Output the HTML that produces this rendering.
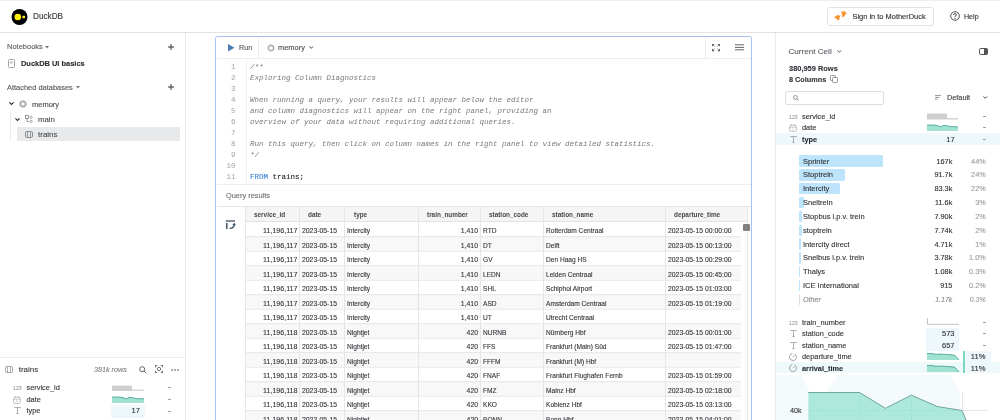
<!DOCTYPE html>
<html><head><meta charset="utf-8">
<style>
*{margin:0;padding:0;box-sizing:border-box}
html,body{width:1000px;height:420px;overflow:hidden;background:#fff;font-family:"Liberation Sans",sans-serif;color:#2f3237}
body{will-change:transform}
.a{position:absolute;white-space:nowrap;-webkit-text-stroke:0.12px currentColor}
.b{position:absolute}
svg{position:absolute;overflow:visible}
</style></head><body>
<div class="b" style="left:0px;top:0px;width:1000px;height:1px;background:#efefef;"></div>
<div class="b" style="left:0px;top:32px;width:1000px;height:1px;background:#e3e3e3;"></div>
<svg style="left:11px;top:8.5px" width="17" height="17" viewBox="0 0 17 17"><circle cx="8.5" cy="8" r="8" fill="#000"/><circle cx="6.8" cy="8" r="3.3" fill="#fff100"/><rect x="11.4" y="6.8" width="2.6" height="2.4" fill="#fff100"/></svg>
<div class="a" style="top:11.30px;font-size:8.2px;line-height:12px;color:#33363b;left:33.00px;">DuckDB</div>
<div class="b" style="left:826.5px;top:7px;width:107px;height:19px;background:#fff;border:1px solid #e2e2e2;border-radius:3px"></div>
<svg style="left:833px;top:10px" width="15" height="11" viewBox="0 0 15 11"><path d="M1.2 7.3 L3.8 5.6 L4.6 4.6 L5.7 5.8 L7.6 5.2 L6.6 7.6 L6 10.7 L4.4 9.4 Z" fill="#f7922e"/><path d="M8 1.2 L9.5 1.8 L11.5 1 L12.6 2.7 L14.2 3.6 L12.4 4.6 L10.9 6.7 L9.3 7.2 L9 4 Z" fill="#f7922e"/></svg>
<div class="a" style="top:10.50px;font-size:7.45px;line-height:12px;color:#2f3237;left:852.50px;">Sign in to MotherDuck</div>
<svg style="left:949.5px;top:11px" width="10" height="10" viewBox="0 0 10 10"><circle cx="5" cy="5" r="4.3" fill="none" stroke="#3a3d42" stroke-width="0.9"/><path d="M3.6 4 Q3.6 2.6 5 2.6 Q6.4 2.6 6.4 3.9 Q6.4 4.8 5 5.3 L5 6" fill="none" stroke="#3a3d42" stroke-width="0.9"/><circle cx="5" cy="7.4" r="0.55" fill="#3a3d42"/></svg>
<div class="a" style="top:10.50px;font-size:7.1px;line-height:12px;color:#2f3237;left:964.00px;">Help</div>
<div class="b" style="left:185px;top:33px;width:1px;height:387px;background:#ebebeb;"></div>
<div class="a" style="top:41.00px;font-size:7.5px;line-height:12px;color:#5c6067;left:7.00px;">Notebooks</div>
<svg style="left:45px;top:45.5px" width="4" height="3" viewBox="0 0 4 3"><path d="M0 0 L4 0 L2 2.5Z" fill="#777"/></svg>
<svg style="left:168px;top:43.5px" width="6" height="6" viewBox="0 0 6 6"><path d="M3 0 V6 M0 3 H6" stroke="#333" stroke-width="1"/></svg>
<svg style="left:8px;top:59px" width="7" height="9" viewBox="0 0 7 9"><rect x="0.5" y="0.5" width="6" height="8" rx="1" fill="none" stroke="#9a9a9a" stroke-width="0.9"/><path d="M2 2.5 H4.5 V4.5 H2Z" fill="#bbb"/></svg>
<div class="a" style="top:58.00px;font-size:7.45px;line-height:12px;color:#2b2e33;left:21.00px;font-weight:bold;">DuckDB UI basics</div>
<div class="a" style="top:81.50px;font-size:7.45px;line-height:12px;color:#55595f;left:7.00px;">Attached databases</div>
<svg style="left:75.5px;top:86px" width="4" height="3" viewBox="0 0 4 3"><path d="M0 0 L4 0 L2 2.5Z" fill="#777"/></svg>
<svg style="left:168px;top:84px" width="6" height="6" viewBox="0 0 6 6"><path d="M3 0 V6 M0 3 H6" stroke="#333" stroke-width="1"/></svg>
<svg style="left:9px;top:102px" width="5" height="3" viewBox="0 0 5 3"><path d="M0.4 0.4 L2.5 2.5 L4.6 0.4" fill="none" stroke="#333" stroke-width="1.2"/></svg>
<svg style="left:19px;top:100.3px" width="8" height="8" viewBox="0 0 8 8"><circle cx="4" cy="4" r="2.5" fill="none" stroke="#a9a9a9" stroke-width="1.5"/><circle cx="4" cy="4" r="3.5" fill="none" stroke="#b9b9b9" stroke-width="1" stroke-dasharray="1.1 0.7"/></svg>
<div class="a" style="top:99.00px;font-size:7.5px;line-height:12px;color:#4a4d52;left:32.00px;">memory</div>
<div class="b" style="left:10px;top:112px;width:1px;height:29px;background:#e9e9e9;"></div>
<svg style="left:15px;top:117.5px" width="5" height="3" viewBox="0 0 5 3"><path d="M0.4 0.4 L2.5 2.5 L4.6 0.4" fill="none" stroke="#333" stroke-width="1.2"/></svg>
<svg style="left:25px;top:115px" width="8" height="8" viewBox="0 0 8 8"><rect x="0.5" y="0.5" width="3" height="3" fill="none" stroke="#888" stroke-width="0.8"/><path d="M2 3.5 V6.5 H4" fill="none" stroke="#888" stroke-width="0.8"/><rect x="4.8" y="1.3" width="2.5" height="2" rx="1" fill="none" stroke="#888" stroke-width="0.7"/><rect x="4.8" y="5.5" width="2.5" height="2" rx="1" fill="none" stroke="#888" stroke-width="0.7"/></svg>
<div class="a" style="top:114.00px;font-size:7.8px;line-height:12px;color:#4a4d52;left:38.00px;">main</div>
<div class="b" style="left:17px;top:126.5px;width:163px;height:14.5px;background:#e8e9eb;"></div>
<svg style="left:25px;top:131px" width="8" height="7" viewBox="0 0 8 7"><rect x="0.5" y="0.5" width="7" height="6" rx="1.3" fill="none" stroke="#808287" stroke-width="0.9"/><path d="M2.5 0.5 V6.5 M5.5 0.5 V6.5" stroke="#8a8c90" stroke-width="0.9"/></svg>
<div class="a" style="top:129.00px;font-size:8px;line-height:12px;color:#4a4d52;left:38.00px;">trains</div>
<div class="b" style="left:0px;top:357px;width:185px;height:1px;background:#ececec;"></div>
<svg style="left:5px;top:366px" width="8" height="7" viewBox="0 0 8 7"><rect x="0.5" y="0.5" width="7" height="6" rx="1.3" fill="none" stroke="#8d8f94" stroke-width="0.8"/><path d="M2.5 0.5 V6.5 M5.5 0.5 V6.5" stroke="#9a9ca0" stroke-width="0.8"/></svg>
<div class="a" style="top:364.00px;font-size:8px;line-height:12px;color:#3a3d42;left:18.70px;">trains</div>
<div class="a" style="top:364.00px;font-size:7.2px;line-height:12px;color:#808389;left:94.00px;font-style:italic;">381k rows</div>
<svg style="left:139px;top:366px" width="8" height="8" viewBox="0 0 8 8"><circle cx="3.2" cy="3.2" r="2.5" fill="none" stroke="#555" stroke-width="0.9"/><path d="M5 5 L7.3 7.3" stroke="#555" stroke-width="0.9"/></svg>
<svg style="left:155px;top:365px" width="8" height="8" viewBox="0 0 8 8"><path d="M0.5 2.2 V0.5 H2.2 M5.8 0.5 H7.5 V2.2 M7.5 5.8 V7.5 H5.8 M2.2 7.5 H0.5 V5.8" fill="none" stroke="#555" stroke-width="0.9"/><circle cx="4" cy="4" r="1.7" fill="none" stroke="#555" stroke-width="0.8"/></svg>
<svg style="left:171px;top:368.5px" width="8" height="2" viewBox="0 0 8 2"><circle cx="1" cy="1" r="0.8" fill="#444"/><circle cx="4" cy="1" r="0.8" fill="#444"/><circle cx="7" cy="1" r="0.8" fill="#444"/></svg>
<div class="a" style="top:384.00px;font-size:5.2px;line-height:8px;color:#9a9da2;left:13.00px;">123</div>
<div class="a" style="top:381.90px;font-size:7.4px;line-height:12px;color:#33363b;left:26.50px;">service_id</div>
<svg style="left:112px;top:385px" width="32" height="6" viewBox="0 0 32 6"><path d="M0 0.5 H19 L20 1.5 V5.5 L32 5.5 L32 6 L0 6Z" fill="#cfcfd2"/><path d="M20 5 H32" stroke="#bbb" stroke-width="0.6"/></svg>
<div class="b" style="left:168.3px;top:387.4px;width:2.8px;height:0.9px;background:#a0a0a0;"></div>
<svg style="left:13px;top:395.5px" width="8" height="8" viewBox="0 0 8 8"><rect x="0.6" y="1.2" width="6.8" height="6.2" rx="1.2" fill="none" stroke="#b0b2b6" stroke-width="0.8"/><path d="M0.6 3.2 H7.4 M2.5 0.3 V2 M5.5 0.3 V2 M4 4.5 V6.5" stroke="#b0b2b6" stroke-width="0.7"/></svg>
<div class="a" style="top:394.00px;font-size:7.4px;line-height:12px;color:#33363b;left:26.50px;">date</div>
<svg style="left:112px;top:396px" width="32" height="7" viewBox="0 0 32 7"><path d="M0.00 1.00 L7.00 1.00 L11.00 1.60 L14.00 2.80 L17.00 1.60 L20.00 1.50 L24.00 2.60 L32.00 2.80 L32 7 L0 7Z" fill="#9fe2d2"/><path d="M0.00 1.00 L7.00 1.00 L11.00 1.60 L14.00 2.80 L17.00 1.60 L20.00 1.50 L24.00 2.60 L32.00 2.80" fill="none" stroke="#2f8f7c" stroke-width="0.7"/></svg>
<div class="b" style="left:168.3px;top:399px;width:2.8px;height:0.9px;background:#a0a0a0;"></div>
<div class="b" style="left:111px;top:405px;width:34px;height:13px;background:#eef8fc;"></div>
<svg style="left:13.5px;top:407.3px" width="7" height="7" viewBox="0 0 7 7"><path d="M0.5 1.2 V0.5 H6.5 V1.2 M3.5 0.5 V6.5 M2.3 6.5 H4.7" fill="none" stroke="#9a9da2" stroke-width="0.8"/></svg>
<div class="a" style="top:405.00px;font-size:7.4px;line-height:12px;color:#33363b;left:26.50px;">type</div>
<div class="a" style="top:405.30px;font-size:7.6px;line-height:12px;color:#2f3237;right:860.00px;text-align:right;">17</div>
<div class="b" style="left:168.3px;top:410.7px;width:2.8px;height:0.9px;background:#a0a0a0;"></div>
<div class="b" style="left:215px;top:36px;width:537px;height:400px;border:1.8px solid #a3c2ee;border-radius:2.5px"></div>
<div class="b" style="left:216.5px;top:58px;width:534px;height:1px;background:#eeeeee;"></div>
<svg style="left:228px;top:44px" width="7" height="8" viewBox="0 0 7 8"><path d="M0 0 L6.5 3.8 L0 7.6Z" fill="#4b7eb0"/></svg>
<div class="a" style="top:42.00px;font-size:7.2px;line-height:12px;color:#54575c;left:239.00px;">Run</div>
<div class="b" style="left:258px;top:37.5px;width:1px;height:20.5px;background:#ededed;"></div>
<svg style="left:266.5px;top:43.5px" width="8" height="8" viewBox="0 0 8 8"><circle cx="4" cy="4" r="2.5" fill="none" stroke="#b0b0b0" stroke-width="1.3"/><circle cx="4" cy="4" r="3.5" fill="none" stroke="#c0c0c0" stroke-width="0.9" stroke-dasharray="1.1 0.7"/></svg>
<div class="a" style="top:42.00px;font-size:7.45px;line-height:12px;color:#4c4f54;left:278.00px;">memory</div>
<svg style="left:309px;top:46px" width="4.5" height="3" viewBox="0 0 4.5 3"><path d="M0.4 0.4 L2.25 2.4 L4.1 0.4" fill="none" stroke="#5a5a5a" stroke-width="1"/></svg>
<div class="b" style="left:704.5px;top:37.5px;width:1px;height:20.5px;background:#ededed;"></div>
<svg style="left:712.4px;top:44px" width="7.7" height="7.2" viewBox="0 0 7.7 7.2"><path d="M0 0 H2.6 L0 2.6Z M8 0 H5.4 L8 2.6Z M0 7.2 H2.6 L0 4.6Z M8 7.2 H5.4 L8 4.6Z" fill="#555"/><path d="M1 1 L3 2.8 M7 1 L5 2.8 M1 6.2 L3 4.4 M7 6.2 L5 4.4" stroke="#777" stroke-width="0.6"/></svg>
<svg style="left:735px;top:44px" width="9" height="7" viewBox="0 0 9 7"><path d="M0 0.8 H9 M0 3.4 H9 M0 5.8 H9" stroke="#666" stroke-width="1"/></svg>
<div class="b" style="left:246px;top:59px;width:1px;height:125px;background:#f0f0f0;"></div>
<div class="a" style="top:62.30px;font-size:7.5px;line-height:11px;color:#a3a3a3;right:764.50px;text-align:right;font-family:'Liberation Mono',monospace;-webkit-text-stroke:0;">1</div>
<div class="a" style="top:62.30px;font-size:7.5px;line-height:11px;color:#7a7a7a;left:250.00px;font-style:italic;font-family:'Liberation Mono',monospace;-webkit-text-stroke:0;">/**</div>
<div class="a" style="top:73.30px;font-size:7.5px;line-height:11px;color:#a3a3a3;right:764.50px;text-align:right;font-family:'Liberation Mono',monospace;-webkit-text-stroke:0;">2</div>
<div class="a" style="top:73.30px;font-size:7.5px;line-height:11px;color:#7a7a7a;left:250.00px;font-style:italic;font-family:'Liberation Mono',monospace;-webkit-text-stroke:0;">Exploring Column Diagnostics</div>
<div class="a" style="top:84.30px;font-size:7.5px;line-height:11px;color:#a3a3a3;right:764.50px;text-align:right;font-family:'Liberation Mono',monospace;-webkit-text-stroke:0;">3</div>
<div class="a" style="top:84.30px;font-size:7.5px;line-height:11px;color:#7a7a7a;left:250.00px;font-style:italic;font-family:'Liberation Mono',monospace;-webkit-text-stroke:0;"></div>
<div class="a" style="top:95.30px;font-size:7.5px;line-height:11px;color:#a3a3a3;right:764.50px;text-align:right;font-family:'Liberation Mono',monospace;-webkit-text-stroke:0;">4</div>
<div class="a" style="top:95.30px;font-size:7.5px;line-height:11px;color:#7a7a7a;left:250.00px;font-style:italic;font-family:'Liberation Mono',monospace;-webkit-text-stroke:0;">When running a query, your results will appear below the editor</div>
<div class="a" style="top:106.30px;font-size:7.5px;line-height:11px;color:#a3a3a3;right:764.50px;text-align:right;font-family:'Liberation Mono',monospace;-webkit-text-stroke:0;">5</div>
<div class="a" style="top:106.30px;font-size:7.5px;line-height:11px;color:#7a7a7a;left:250.00px;font-style:italic;font-family:'Liberation Mono',monospace;-webkit-text-stroke:0;">and column diagnostics will appear on the right panel, providing an</div>
<div class="a" style="top:117.30px;font-size:7.5px;line-height:11px;color:#a3a3a3;right:764.50px;text-align:right;font-family:'Liberation Mono',monospace;-webkit-text-stroke:0;">6</div>
<div class="a" style="top:117.30px;font-size:7.5px;line-height:11px;color:#7a7a7a;left:250.00px;font-style:italic;font-family:'Liberation Mono',monospace;-webkit-text-stroke:0;">overview of your data without requiring additional queries.</div>
<div class="a" style="top:128.30px;font-size:7.5px;line-height:11px;color:#a3a3a3;right:764.50px;text-align:right;font-family:'Liberation Mono',monospace;-webkit-text-stroke:0;">7</div>
<div class="a" style="top:128.30px;font-size:7.5px;line-height:11px;color:#7a7a7a;left:250.00px;font-style:italic;font-family:'Liberation Mono',monospace;-webkit-text-stroke:0;"></div>
<div class="a" style="top:139.30px;font-size:7.5px;line-height:11px;color:#a3a3a3;right:764.50px;text-align:right;font-family:'Liberation Mono',monospace;-webkit-text-stroke:0;">8</div>
<div class="a" style="top:139.30px;font-size:7.5px;line-height:11px;color:#7a7a7a;left:250.00px;font-style:italic;font-family:'Liberation Mono',monospace;-webkit-text-stroke:0;">Run this query, then click on column names in the right panel to view detailed statistics.</div>
<div class="a" style="top:150.30px;font-size:7.5px;line-height:11px;color:#a3a3a3;right:764.50px;text-align:right;font-family:'Liberation Mono',monospace;-webkit-text-stroke:0;">9</div>
<div class="a" style="top:150.30px;font-size:7.5px;line-height:11px;color:#7a7a7a;left:250.00px;font-style:italic;font-family:'Liberation Mono',monospace;-webkit-text-stroke:0;">*/</div>
<div class="a" style="top:161.30px;font-size:7.5px;line-height:11px;color:#a3a3a3;right:764.50px;text-align:right;font-family:'Liberation Mono',monospace;-webkit-text-stroke:0;">10</div>
<div class="a" style="top:161.30px;font-size:7.5px;line-height:11px;color:#7a7a7a;left:250.00px;font-style:italic;font-family:'Liberation Mono',monospace;-webkit-text-stroke:0;"></div>
<div class="a" style="top:172.30px;font-size:7.5px;line-height:11px;color:#a3a3a3;right:764.50px;text-align:right;font-family:'Liberation Mono',monospace;-webkit-text-stroke:0;">11</div>
<div class="a" style="left:250px;top:171.8px;font-size:7.5px;line-height:11px;font-family:'Liberation Mono',monospace;color:#222;-webkit-text-stroke:0.1px #222"><span style="color:#3f84d8;-webkit-text-stroke:0.1px #3f84d8">FROM</span> trains;</div>
<div class="b" style="left:216.5px;top:184px;width:534px;height:1px;background:#eeeeee;"></div>
<div class="a" style="top:190.00px;font-size:7.4px;line-height:12px;color:#6d7076;left:226.00px;">Query results</div>
<div class="b" style="left:216.5px;top:206px;width:534px;height:1px;background:#e6e6e6;"></div>
<div class="b" style="left:246px;top:207px;width:501px;height:14px;background:#f5f5f5;"></div>
<div class="b" style="left:246px;top:220.5px;width:501px;height:1.5px;background:#e3e3e3;"></div>
<div class="b" style="left:245px;top:207px;width:1px;height:213px;background:#e6e6e6;"></div>
<div class="b" style="left:299px;top:207px;width:1px;height:213px;background:#e6e6e6;"></div>
<div class="b" style="left:344px;top:207px;width:1px;height:213px;background:#e6e6e6;"></div>
<div class="b" style="left:418px;top:207px;width:1px;height:213px;background:#e6e6e6;"></div>
<div class="b" style="left:480px;top:207px;width:1px;height:213px;background:#e6e6e6;"></div>
<div class="b" style="left:543px;top:207px;width:1px;height:213px;background:#e6e6e6;"></div>
<div class="b" style="left:665px;top:207px;width:1px;height:213px;background:#e6e6e6;"></div>
<div class="b" style="left:747px;top:207px;width:1px;height:213px;background:#e6e6e6;"></div>
<div class="a" style="top:210.00px;font-size:6.4px;line-height:10px;color:#44474c;left:254.00px;font-weight:bold;-webkit-text-stroke:0;">service_id</div>
<div class="a" style="top:210.00px;font-size:6.4px;line-height:10px;color:#44474c;left:308.00px;font-weight:bold;-webkit-text-stroke:0;">date</div>
<div class="a" style="top:210.00px;font-size:6.4px;line-height:10px;color:#44474c;left:354.00px;font-weight:bold;-webkit-text-stroke:0;">type</div>
<div class="a" style="top:210.00px;font-size:6.4px;line-height:10px;color:#44474c;left:427.00px;font-weight:bold;-webkit-text-stroke:0;">train_number</div>
<div class="a" style="top:210.00px;font-size:6.4px;line-height:10px;color:#44474c;left:489.00px;font-weight:bold;-webkit-text-stroke:0;">station_code</div>
<div class="a" style="top:210.00px;font-size:6.4px;line-height:10px;color:#44474c;left:552.00px;font-weight:bold;-webkit-text-stroke:0;">station_name</div>
<div class="a" style="top:210.00px;font-size:6.4px;line-height:10px;color:#44474c;left:674.00px;font-weight:bold;-webkit-text-stroke:0;">departure_time</div>
<svg style="left:225px;top:219px" width="11" height="11" viewBox="0 0 11 11"><path d="M0.8 2 H10" stroke="#3f4f63" stroke-width="1.3"/><path d="M1.8 3.9 V10" stroke="#3f4f63" stroke-width="1.5"/><path d="M4.6 9.4 Q9.2 9.4 9.2 5.6" fill="none" stroke="#3f4f63" stroke-width="1.3"/><path d="M7.2 6.2 L9.2 3.8 L11 6.2Z" fill="#3f4f63"/></svg>
<svg style="left:246px;top:221px" width="495" height="200" viewBox="0 0 495 200"><rect x="0" y="15.00" width="495" height="14.5" fill="#f8f8f8"/><rect x="0" y="44.00" width="495" height="14.5" fill="#f8f8f8"/><rect x="0" y="73.00" width="495" height="14.5" fill="#f8f8f8"/><rect x="0" y="102.00" width="495" height="14.5" fill="#f8f8f8"/><rect x="0" y="131.00" width="495" height="14.5" fill="#f8f8f8"/><rect x="0" y="160.00" width="495" height="14.5" fill="#f8f8f8"/><rect x="0" y="189.00" width="495" height="14.5" fill="#f8f8f8"/><rect x="0" y="15.20" width="495" height="1" fill="#e6e6e6"/><rect x="0" y="29.70" width="495" height="1" fill="#e6e6e6"/><rect x="0" y="44.20" width="495" height="1" fill="#e6e6e6"/><rect x="0" y="58.70" width="495" height="1" fill="#e6e6e6"/><rect x="0" y="73.20" width="495" height="1" fill="#e6e6e6"/><rect x="0" y="87.70" width="495" height="1" fill="#e6e6e6"/><rect x="0" y="102.20" width="495" height="1" fill="#e6e6e6"/><rect x="0" y="116.70" width="495" height="1" fill="#e6e6e6"/><rect x="0" y="131.20" width="495" height="1" fill="#e6e6e6"/><rect x="0" y="145.70" width="495" height="1" fill="#e6e6e6"/><rect x="0" y="160.20" width="495" height="1" fill="#e6e6e6"/><rect x="0" y="174.70" width="495" height="1" fill="#e6e6e6"/><rect x="0" y="189.20" width="495" height="1" fill="#e6e6e6"/><rect x="0" y="203.70" width="495" height="1" fill="#e6e6e6"/></svg>
<div class="a" style="top:226.20px;font-size:7.1px;line-height:10px;color:#35383d;right:702.50px;text-align:right;">11,196,117</div>
<div class="a" style="top:226.20px;font-size:6.85px;line-height:10px;color:#35383d;left:302.00px;">2023-05-15</div>
<div class="a" style="top:226.20px;font-size:6.6px;line-height:10px;color:#35383d;left:347.00px;">Intercity</div>
<div class="a" style="top:226.20px;font-size:6.85px;line-height:10px;color:#35383d;right:522.00px;text-align:right;">1,410</div>
<div class="a" style="top:226.20px;font-size:6.6px;line-height:10px;color:#35383d;left:483.00px;">RTD</div>
<div class="a" style="top:226.20px;font-size:6.6px;line-height:10px;color:#35383d;left:546.00px;">Rotterdam Centraal</div>
<div class="a" style="top:226.20px;font-size:6.85px;line-height:10px;color:#35383d;left:668.00px;">2023-05-15 00:00:00</div>
<div class="a" style="top:240.70px;font-size:7.1px;line-height:10px;color:#35383d;right:702.50px;text-align:right;">11,196,117</div>
<div class="a" style="top:240.70px;font-size:6.85px;line-height:10px;color:#35383d;left:302.00px;">2023-05-15</div>
<div class="a" style="top:240.70px;font-size:6.6px;line-height:10px;color:#35383d;left:347.00px;">Intercity</div>
<div class="a" style="top:240.70px;font-size:6.85px;line-height:10px;color:#35383d;right:522.00px;text-align:right;">1,410</div>
<div class="a" style="top:240.70px;font-size:6.6px;line-height:10px;color:#35383d;left:483.00px;">DT</div>
<div class="a" style="top:240.70px;font-size:6.6px;line-height:10px;color:#35383d;left:546.00px;">Delft</div>
<div class="a" style="top:240.70px;font-size:6.85px;line-height:10px;color:#35383d;left:668.00px;">2023-05-15 00:13:00</div>
<div class="a" style="top:255.20px;font-size:7.1px;line-height:10px;color:#35383d;right:702.50px;text-align:right;">11,196,117</div>
<div class="a" style="top:255.20px;font-size:6.85px;line-height:10px;color:#35383d;left:302.00px;">2023-05-15</div>
<div class="a" style="top:255.20px;font-size:6.6px;line-height:10px;color:#35383d;left:347.00px;">Intercity</div>
<div class="a" style="top:255.20px;font-size:6.85px;line-height:10px;color:#35383d;right:522.00px;text-align:right;">1,410</div>
<div class="a" style="top:255.20px;font-size:6.6px;line-height:10px;color:#35383d;left:483.00px;">GV</div>
<div class="a" style="top:255.20px;font-size:6.6px;line-height:10px;color:#35383d;left:546.00px;">Den Haag HS</div>
<div class="a" style="top:255.20px;font-size:6.85px;line-height:10px;color:#35383d;left:668.00px;">2023-05-15 00:29:00</div>
<div class="a" style="top:269.70px;font-size:7.1px;line-height:10px;color:#35383d;right:702.50px;text-align:right;">11,196,117</div>
<div class="a" style="top:269.70px;font-size:6.85px;line-height:10px;color:#35383d;left:302.00px;">2023-05-15</div>
<div class="a" style="top:269.70px;font-size:6.6px;line-height:10px;color:#35383d;left:347.00px;">Intercity</div>
<div class="a" style="top:269.70px;font-size:6.85px;line-height:10px;color:#35383d;right:522.00px;text-align:right;">1,410</div>
<div class="a" style="top:269.70px;font-size:6.6px;line-height:10px;color:#35383d;left:483.00px;">LEDN</div>
<div class="a" style="top:269.70px;font-size:6.6px;line-height:10px;color:#35383d;left:546.00px;">Leiden Centraal</div>
<div class="a" style="top:269.70px;font-size:6.85px;line-height:10px;color:#35383d;left:668.00px;">2023-05-15 00:45:00</div>
<div class="a" style="top:284.20px;font-size:7.1px;line-height:10px;color:#35383d;right:702.50px;text-align:right;">11,196,117</div>
<div class="a" style="top:284.20px;font-size:6.85px;line-height:10px;color:#35383d;left:302.00px;">2023-05-15</div>
<div class="a" style="top:284.20px;font-size:6.6px;line-height:10px;color:#35383d;left:347.00px;">Intercity</div>
<div class="a" style="top:284.20px;font-size:6.85px;line-height:10px;color:#35383d;right:522.00px;text-align:right;">1,410</div>
<div class="a" style="top:284.20px;font-size:6.6px;line-height:10px;color:#35383d;left:483.00px;">SHL</div>
<div class="a" style="top:284.20px;font-size:6.6px;line-height:10px;color:#35383d;left:546.00px;">Schiphol Airport</div>
<div class="a" style="top:284.20px;font-size:6.85px;line-height:10px;color:#35383d;left:668.00px;">2023-05-15 01:03:00</div>
<div class="a" style="top:298.70px;font-size:7.1px;line-height:10px;color:#35383d;right:702.50px;text-align:right;">11,196,117</div>
<div class="a" style="top:298.70px;font-size:6.85px;line-height:10px;color:#35383d;left:302.00px;">2023-05-15</div>
<div class="a" style="top:298.70px;font-size:6.6px;line-height:10px;color:#35383d;left:347.00px;">Intercity</div>
<div class="a" style="top:298.70px;font-size:6.85px;line-height:10px;color:#35383d;right:522.00px;text-align:right;">1,410</div>
<div class="a" style="top:298.70px;font-size:6.6px;line-height:10px;color:#35383d;left:483.00px;">ASD</div>
<div class="a" style="top:298.70px;font-size:6.6px;line-height:10px;color:#35383d;left:546.00px;">Amsterdam Centraal</div>
<div class="a" style="top:298.70px;font-size:6.85px;line-height:10px;color:#35383d;left:668.00px;">2023-05-15 01:19:00</div>
<div class="a" style="top:313.20px;font-size:7.1px;line-height:10px;color:#35383d;right:702.50px;text-align:right;">11,196,117</div>
<div class="a" style="top:313.20px;font-size:6.85px;line-height:10px;color:#35383d;left:302.00px;">2023-05-15</div>
<div class="a" style="top:313.20px;font-size:6.6px;line-height:10px;color:#35383d;left:347.00px;">Intercity</div>
<div class="a" style="top:313.20px;font-size:6.85px;line-height:10px;color:#35383d;right:522.00px;text-align:right;">1,410</div>
<div class="a" style="top:313.20px;font-size:6.6px;line-height:10px;color:#35383d;left:483.00px;">UT</div>
<div class="a" style="top:313.20px;font-size:6.6px;line-height:10px;color:#35383d;left:546.00px;">Utrecht Centraal</div>
<div class="a" style="top:313.20px;font-size:6.85px;line-height:10px;color:#35383d;left:668.00px;"></div>
<div class="a" style="top:327.70px;font-size:7.1px;line-height:10px;color:#35383d;right:702.50px;text-align:right;">11,196,118</div>
<div class="a" style="top:327.70px;font-size:6.85px;line-height:10px;color:#35383d;left:302.00px;">2023-05-15</div>
<div class="a" style="top:327.70px;font-size:6.6px;line-height:10px;color:#35383d;left:347.00px;">Nightjet</div>
<div class="a" style="top:327.70px;font-size:6.85px;line-height:10px;color:#35383d;right:522.00px;text-align:right;">420</div>
<div class="a" style="top:327.70px;font-size:6.6px;line-height:10px;color:#35383d;left:483.00px;">NURNB</div>
<div class="a" style="top:327.70px;font-size:6.6px;line-height:10px;color:#35383d;left:546.00px;">N&uuml;rnberg Hbf</div>
<div class="a" style="top:327.70px;font-size:6.85px;line-height:10px;color:#35383d;left:668.00px;">2023-05-15 00:01:00</div>
<div class="a" style="top:342.20px;font-size:7.1px;line-height:10px;color:#35383d;right:702.50px;text-align:right;">11,196,118</div>
<div class="a" style="top:342.20px;font-size:6.85px;line-height:10px;color:#35383d;left:302.00px;">2023-05-15</div>
<div class="a" style="top:342.20px;font-size:6.6px;line-height:10px;color:#35383d;left:347.00px;">Nightjet</div>
<div class="a" style="top:342.20px;font-size:6.85px;line-height:10px;color:#35383d;right:522.00px;text-align:right;">420</div>
<div class="a" style="top:342.20px;font-size:6.6px;line-height:10px;color:#35383d;left:483.00px;">FFS</div>
<div class="a" style="top:342.20px;font-size:6.6px;line-height:10px;color:#35383d;left:546.00px;">Frankfurt (Main) S&uuml;d</div>
<div class="a" style="top:342.20px;font-size:6.85px;line-height:10px;color:#35383d;left:668.00px;">2023-05-15 01:47:00</div>
<div class="a" style="top:356.70px;font-size:7.1px;line-height:10px;color:#35383d;right:702.50px;text-align:right;">11,196,118</div>
<div class="a" style="top:356.70px;font-size:6.85px;line-height:10px;color:#35383d;left:302.00px;">2023-05-15</div>
<div class="a" style="top:356.70px;font-size:6.6px;line-height:10px;color:#35383d;left:347.00px;">Nightjet</div>
<div class="a" style="top:356.70px;font-size:6.85px;line-height:10px;color:#35383d;right:522.00px;text-align:right;">420</div>
<div class="a" style="top:356.70px;font-size:6.6px;line-height:10px;color:#35383d;left:483.00px;">FFFM</div>
<div class="a" style="top:356.70px;font-size:6.6px;line-height:10px;color:#35383d;left:546.00px;">Frankfurt (M) Hbf</div>
<div class="a" style="top:356.70px;font-size:6.85px;line-height:10px;color:#35383d;left:668.00px;"></div>
<div class="a" style="top:371.20px;font-size:7.1px;line-height:10px;color:#35383d;right:702.50px;text-align:right;">11,196,118</div>
<div class="a" style="top:371.20px;font-size:6.85px;line-height:10px;color:#35383d;left:302.00px;">2023-05-15</div>
<div class="a" style="top:371.20px;font-size:6.6px;line-height:10px;color:#35383d;left:347.00px;">Nightjet</div>
<div class="a" style="top:371.20px;font-size:6.85px;line-height:10px;color:#35383d;right:522.00px;text-align:right;">420</div>
<div class="a" style="top:371.20px;font-size:6.6px;line-height:10px;color:#35383d;left:483.00px;">FNAF</div>
<div class="a" style="top:371.20px;font-size:6.6px;line-height:10px;color:#35383d;left:546.00px;">Frankfurt Flughafen Fernb</div>
<div class="a" style="top:371.20px;font-size:6.85px;line-height:10px;color:#35383d;left:668.00px;">2023-05-15 01:59:00</div>
<div class="a" style="top:385.70px;font-size:7.1px;line-height:10px;color:#35383d;right:702.50px;text-align:right;">11,196,118</div>
<div class="a" style="top:385.70px;font-size:6.85px;line-height:10px;color:#35383d;left:302.00px;">2023-05-15</div>
<div class="a" style="top:385.70px;font-size:6.6px;line-height:10px;color:#35383d;left:347.00px;">Nightjet</div>
<div class="a" style="top:385.70px;font-size:6.85px;line-height:10px;color:#35383d;right:522.00px;text-align:right;">420</div>
<div class="a" style="top:385.70px;font-size:6.6px;line-height:10px;color:#35383d;left:483.00px;">FMZ</div>
<div class="a" style="top:385.70px;font-size:6.6px;line-height:10px;color:#35383d;left:546.00px;">Mainz Hbf</div>
<div class="a" style="top:385.70px;font-size:6.85px;line-height:10px;color:#35383d;left:668.00px;">2023-05-15 02:18:00</div>
<div class="a" style="top:400.20px;font-size:7.1px;line-height:10px;color:#35383d;right:702.50px;text-align:right;">11,196,118</div>
<div class="a" style="top:400.20px;font-size:6.85px;line-height:10px;color:#35383d;left:302.00px;">2023-05-15</div>
<div class="a" style="top:400.20px;font-size:6.6px;line-height:10px;color:#35383d;left:347.00px;">Nightjet</div>
<div class="a" style="top:400.20px;font-size:6.85px;line-height:10px;color:#35383d;right:522.00px;text-align:right;">420</div>
<div class="a" style="top:400.20px;font-size:6.6px;line-height:10px;color:#35383d;left:483.00px;">KKO</div>
<div class="a" style="top:400.20px;font-size:6.6px;line-height:10px;color:#35383d;left:546.00px;">Koblenz Hbf</div>
<div class="a" style="top:400.20px;font-size:6.85px;line-height:10px;color:#35383d;left:668.00px;">2023-05-15 03:13:00</div>
<div class="a" style="top:414.70px;font-size:7.1px;line-height:10px;color:#35383d;right:702.50px;text-align:right;">11,196,118</div>
<div class="a" style="top:414.70px;font-size:6.85px;line-height:10px;color:#35383d;left:302.00px;">2023-05-15</div>
<div class="a" style="top:414.70px;font-size:6.6px;line-height:10px;color:#35383d;left:347.00px;">Nightjet</div>
<div class="a" style="top:414.70px;font-size:6.85px;line-height:10px;color:#35383d;right:522.00px;text-align:right;">420</div>
<div class="a" style="top:414.70px;font-size:6.6px;line-height:10px;color:#35383d;left:483.00px;">BONN</div>
<div class="a" style="top:414.70px;font-size:6.6px;line-height:10px;color:#35383d;left:546.00px;">Bonn Hbf</div>
<div class="a" style="top:414.70px;font-size:6.85px;line-height:10px;color:#35383d;left:668.00px;">2023-05-15 04:01:00</div>
<div class="b" style="left:245px;top:207px;width:1px;height:213px;background:#e6e6e6;"></div>
<div class="b" style="left:299px;top:207px;width:1px;height:213px;background:#e6e6e6;"></div>
<div class="b" style="left:344px;top:207px;width:1px;height:213px;background:#e6e6e6;"></div>
<div class="b" style="left:418px;top:207px;width:1px;height:213px;background:#e6e6e6;"></div>
<div class="b" style="left:480px;top:207px;width:1px;height:213px;background:#e6e6e6;"></div>
<div class="b" style="left:543px;top:207px;width:1px;height:213px;background:#e6e6e6;"></div>
<div class="b" style="left:665px;top:207px;width:1px;height:213px;background:#e6e6e6;"></div>
<div class="b" style="left:747px;top:207px;width:1px;height:213px;background:#e6e6e6;"></div>
<div class="b" style="left:743px;top:224px;width:7px;height:6.5px;background:#808080;border-radius:1px"></div>
<div class="b" style="left:775px;top:33px;width:1px;height:387px;background:#ebebeb;"></div>
<div class="a" style="top:45.50px;font-size:8.1px;line-height:12px;color:#5b5f66;left:788.50px;">Current Cell</div>
<svg style="left:837px;top:50px" width="4.5" height="3" viewBox="0 0 4.5 3"><path d="M0.4 0.4 L2.25 2.4 L4.1 0.4" fill="none" stroke="#5a5a5a" stroke-width="1"/></svg>
<svg style="left:979px;top:48px" width="9" height="7" viewBox="0 0 9 7"><rect x="0.5" y="0.5" width="8" height="6" rx="1.3" fill="none" stroke="#555" stroke-width="1"/><rect x="5" y="0.5" width="3.5" height="6" fill="#555"/></svg>
<div class="a" style="top:62.50px;font-size:7.45px;line-height:12px;color:#33363b;left:789.00px;font-weight:bold;">380,959 Rows</div>
<div class="a" style="top:74.00px;font-size:7.3px;line-height:12px;color:#33363b;left:789.00px;font-weight:bold;">8 Columns</div>
<svg style="left:830px;top:75px" width="8" height="8" viewBox="0 0 8 8"><rect x="0.5" y="0.5" width="5" height="5" rx="1" fill="none" stroke="#777" stroke-width="0.8"/><rect x="2.5" y="2.5" width="5" height="5" rx="1" fill="#fff" stroke="#777" stroke-width="0.8"/></svg>
<div class="b" style="left:785px;top:90.5px;width:99px;height:14px;background:#fff;border:1px solid #dedede;border-radius:2px"></div>
<svg style="left:792.5px;top:94.5px" width="6" height="6" viewBox="0 0 6 6"><circle cx="2.4" cy="2.4" r="1.9" fill="none" stroke="#777" stroke-width="0.8"/><path d="M3.8 3.8 L5.6 5.6" stroke="#777" stroke-width="0.8"/></svg>
<svg style="left:935px;top:95px" width="7" height="5" viewBox="0 0 7 5"><path d="M0 0.6 H6 M0 2.5 H4.2 M0 4.3 H2.2" stroke="#777" stroke-width="0.8"/></svg>
<div class="a" style="top:91.50px;font-size:7.3px;line-height:12px;color:#3a3d42;left:947.00px;">Default</div>
<svg style="left:982.8px;top:95.9px" width="4.5" height="3" viewBox="0 0 4.5 3"><path d="M0.4 0.4 L2.25 2.4 L4.1 0.4" fill="none" stroke="#5a5a5a" stroke-width="1"/></svg>
<div class="a" style="top:112.80px;font-size:5.2px;line-height:8px;color:#9a9da2;left:789.00px;">123</div>
<div class="a" style="top:110.80px;font-size:7.4px;line-height:12px;color:#33363b;left:802.00px;">service_id</div>
<svg style="left:927px;top:113px" width="31" height="6.5" viewBox="0 0 31 6.5"><path d="M0 0.5 H19 L20 1.5 V6.0 L31 6.0 L31 6.5 L0 6.5Z" fill="#cfcfd2"/><path d="M20 5.5 H31" stroke="#bbb" stroke-width="0.6"/></svg>
<div class="b" style="left:983px;top:115.5px;width:3.3px;height:1px;background:#a0a0a0;"></div>
<svg style="left:789px;top:123.7px" width="8" height="8" viewBox="0 0 8 8"><rect x="0.6" y="1.2" width="6.8" height="6.2" rx="1.2" fill="none" stroke="#b0b2b6" stroke-width="0.8"/><path d="M0.6 3.2 H7.4 M2.5 0.3 V2 M5.5 0.3 V2 M4 4.5 V6.5" stroke="#b0b2b6" stroke-width="0.7"/></svg>
<div class="a" style="top:122.20px;font-size:7.4px;line-height:12px;color:#33363b;left:802.00px;">date</div>
<svg style="left:927px;top:124px" width="31" height="7" viewBox="0 0 31 7"><path d="M0.00 1.00 L6.78 1.00 L10.66 1.60 L13.56 2.80 L16.47 1.60 L19.38 1.50 L23.25 2.60 L31.00 2.80 L31 7 L0 7Z" fill="#9fe2d2"/><path d="M0.00 1.00 L6.78 1.00 L10.66 1.60 L13.56 2.80 L16.47 1.60 L19.38 1.50 L23.25 2.60 L31.00 2.80" fill="none" stroke="#2f8f7c" stroke-width="0.7"/></svg>
<div class="b" style="left:983px;top:127.1px;width:3.3px;height:1px;background:#a0a0a0;"></div>
<div class="b" style="left:775.5px;top:133px;width:224.5px;height:12px;background:#eef8fc;"></div>
<svg style="left:790px;top:135.8px" width="7" height="7" viewBox="0 0 7 7"><path d="M0.5 1.2 V0.5 H6.5 V1.2 M3.5 0.5 V6.5 M2.3 6.5 H4.7" fill="none" stroke="#9a9da2" stroke-width="0.8"/></svg>
<div class="a" style="top:133.80px;font-size:7.3px;line-height:12px;color:#2b2e33;left:802.00px;font-weight:bold;">type</div>
<div class="a" style="top:133.80px;font-size:7.6px;line-height:12px;color:#2f3237;right:45.30px;text-align:right;">17</div>
<div class="b" style="left:983px;top:138.5px;width:3.3px;height:1px;background:#a0a0a0;"></div>
<div class="b" style="left:798.8px;top:155.4px;width:84px;height:11.3px;background:#bde4fa;border-radius:1px"></div>
<div class="a" style="top:155.50px;font-size:7.5px;line-height:12px;color:#33363b;left:803.00px;">Sprinter</div>
<div class="a" style="top:155.50px;font-size:7.3px;line-height:12px;color:#2f3237;right:47.70px;text-align:right;">167k</div>
<div class="a" style="top:155.50px;font-size:7.3px;line-height:12px;color:#9a9da2;right:14.30px;text-align:right;">44%</div>
<div class="b" style="left:798.8px;top:169.24px;width:46px;height:11.3px;background:#bde4fa;border-radius:1px"></div>
<div class="a" style="top:169.34px;font-size:7.5px;line-height:12px;color:#33363b;left:803.00px;">Stoptrein</div>
<div class="a" style="top:169.34px;font-size:7.3px;line-height:12px;color:#2f3237;right:47.70px;text-align:right;">91.7k</div>
<div class="a" style="top:169.34px;font-size:7.3px;line-height:12px;color:#9a9da2;right:14.30px;text-align:right;">24%</div>
<div class="b" style="left:798.8px;top:183.08px;width:41px;height:11.3px;background:#bde4fa;border-radius:1px"></div>
<div class="a" style="top:183.18px;font-size:7.5px;line-height:12px;color:#33363b;left:803.00px;">Intercity</div>
<div class="a" style="top:183.18px;font-size:7.3px;line-height:12px;color:#2f3237;right:47.70px;text-align:right;">83.3k</div>
<div class="a" style="top:183.18px;font-size:7.3px;line-height:12px;color:#9a9da2;right:14.30px;text-align:right;">22%</div>
<div class="b" style="left:798.8px;top:196.92px;width:5px;height:11.3px;background:#bde4fa;border-radius:1px"></div>
<div class="a" style="top:197.02px;font-size:7.5px;line-height:12px;color:#33363b;left:803.00px;">Sneltrein</div>
<div class="a" style="top:197.02px;font-size:7.3px;line-height:12px;color:#2f3237;right:47.70px;text-align:right;">11.6k</div>
<div class="a" style="top:197.02px;font-size:7.3px;line-height:12px;color:#9a9da2;right:14.30px;text-align:right;">3%</div>
<div class="b" style="left:798.8px;top:210.76000000000002px;width:3.7px;height:11.3px;background:#bde4fa;border-radius:1px"></div>
<div class="a" style="top:210.86px;font-size:7.5px;line-height:12px;color:#33363b;left:803.00px;">Stopbus i.p.v. trein</div>
<div class="a" style="top:210.86px;font-size:7.3px;line-height:12px;color:#2f3237;right:47.70px;text-align:right;">7.90k</div>
<div class="a" style="top:210.86px;font-size:7.3px;line-height:12px;color:#9a9da2;right:14.30px;text-align:right;">2%</div>
<div class="b" style="left:798.8px;top:224.6px;width:3.7px;height:11.3px;background:#bde4fa;border-radius:1px"></div>
<div class="a" style="top:224.70px;font-size:7.5px;line-height:12px;color:#33363b;left:803.00px;">stoptrein</div>
<div class="a" style="top:224.70px;font-size:7.3px;line-height:12px;color:#2f3237;right:47.70px;text-align:right;">7.74k</div>
<div class="a" style="top:224.70px;font-size:7.3px;line-height:12px;color:#9a9da2;right:14.30px;text-align:right;">2%</div>
<div class="b" style="left:798.8px;top:238.44px;width:2.2px;height:11.3px;background:#bde4fa;border-radius:1px"></div>
<div class="a" style="top:238.54px;font-size:7.5px;line-height:12px;color:#33363b;left:803.00px;">Intercity direct</div>
<div class="a" style="top:238.54px;font-size:7.3px;line-height:12px;color:#2f3237;right:47.70px;text-align:right;">4.71k</div>
<div class="a" style="top:238.54px;font-size:7.3px;line-height:12px;color:#9a9da2;right:14.30px;text-align:right;">1%</div>
<div class="b" style="left:798.8px;top:252.28px;width:2px;height:11.3px;background:#bde4fa;border-radius:1px"></div>
<div class="a" style="top:252.38px;font-size:7.5px;line-height:12px;color:#33363b;left:803.00px;">Snelbus i.p.v. trein</div>
<div class="a" style="top:252.38px;font-size:7.3px;line-height:12px;color:#2f3237;right:47.70px;text-align:right;">3.78k</div>
<div class="a" style="top:252.38px;font-size:7.3px;line-height:12px;color:#9a9da2;right:14.30px;text-align:right;">1.0%</div>
<div class="b" style="left:798.8px;top:266.12px;width:1px;height:11.3px;background:#bde4fa;border-radius:1px"></div>
<div class="a" style="top:266.22px;font-size:7.5px;line-height:12px;color:#33363b;left:803.00px;">Thalys</div>
<div class="a" style="top:266.22px;font-size:7.3px;line-height:12px;color:#2f3237;right:47.70px;text-align:right;">1.08k</div>
<div class="a" style="top:266.22px;font-size:7.3px;line-height:12px;color:#9a9da2;right:14.30px;text-align:right;">0.3%</div>
<div class="b" style="left:798.8px;top:279.96px;width:1px;height:11.3px;background:#bde4fa;border-radius:1px"></div>
<div class="a" style="top:280.06px;font-size:7.5px;line-height:12px;color:#33363b;left:803.00px;">ICE International</div>
<div class="a" style="top:280.06px;font-size:7.3px;line-height:12px;color:#2f3237;right:47.70px;text-align:right;">915</div>
<div class="a" style="top:280.06px;font-size:7.3px;line-height:12px;color:#9a9da2;right:14.30px;text-align:right;">0.2%</div>
<div class="b" style="left:798.8px;top:293.79999999999995px;width:1px;height:11.3px;background:#dedede;border-radius:1px"></div>
<div class="a" style="top:293.90px;font-size:7.2px;line-height:12px;color:#8a8d92;left:803.00px;font-style:italic;">Other</div>
<div class="a" style="top:293.90px;font-size:7px;line-height:12px;color:#8a8d92;right:47.70px;text-align:right;font-style:italic;">1.17k</div>
<div class="a" style="top:293.90px;font-size:7px;line-height:12px;color:#9a9da2;right:14.30px;text-align:right;font-style:italic;">0.3%</div>
<div class="a" style="top:318.50px;font-size:5.2px;line-height:8px;color:#9a9da2;left:789.00px;">123</div>
<div class="a" style="top:316.50px;font-size:7.4px;line-height:12px;color:#33363b;left:802.00px;">train_number</div>
<svg style="left:927px;top:318px" width="32" height="7" viewBox="0 0 32 7"><path d="M0.5 0 V6.3 H32" fill="none" stroke="#aaa" stroke-width="0.7"/></svg>
<div class="b" style="left:983px;top:321.5px;width:3.3px;height:1px;background:#a0a0a0;"></div>
<div class="b" style="left:926px;top:328px;width:33px;height:22.5px;background:#eef8fc;"></div>
<svg style="left:790px;top:329.8px" width="7" height="7" viewBox="0 0 7 7"><path d="M0.5 1.2 V0.5 H6.5 V1.2 M3.5 0.5 V6.5 M2.3 6.5 H4.7" fill="none" stroke="#9a9da2" stroke-width="0.8"/></svg>
<div class="a" style="top:327.80px;font-size:7.4px;line-height:12px;color:#33363b;left:802.00px;">station_code</div>
<div class="a" style="top:327.80px;font-size:7.5px;line-height:12px;color:#2f3237;right:45.50px;text-align:right;">573</div>
<div class="b" style="left:983px;top:332.8px;width:3.3px;height:1px;background:#a0a0a0;"></div>
<svg style="left:790px;top:341.5px" width="7" height="7" viewBox="0 0 7 7"><path d="M0.5 1.2 V0.5 H6.5 V1.2 M3.5 0.5 V6.5 M2.3 6.5 H4.7" fill="none" stroke="#9a9da2" stroke-width="0.8"/></svg>
<div class="a" style="top:339.50px;font-size:7.4px;line-height:12px;color:#33363b;left:802.00px;">station_name</div>
<div class="a" style="top:339.50px;font-size:7.5px;line-height:12px;color:#2f3237;right:45.50px;text-align:right;">657</div>
<div class="b" style="left:983px;top:344.5px;width:3.3px;height:1px;background:#a0a0a0;"></div>
<div class="b" style="left:775.5px;top:361.7px;width:224.5px;height:11.5px;background:#eef9fc;"></div>
<div class="b" style="left:963px;top:351px;width:28px;height:22px;background:#eef8fc;"></div>
<svg style="left:789px;top:352.9px" width="8" height="8" viewBox="0 0 8 8"><path d="M5.75 0.97 A3.5 3.5 0 1 1 3.39 0.55" fill="none" stroke="#8d8f93" stroke-width="0.85"/><path d="M4 4.1 L5.5 2.5" stroke="#8d8f93" stroke-width="0.85"/></svg>
<div class="a" style="top:351.00px;font-size:7.4px;line-height:12px;color:#33363b;left:802.00px;">departure_time</div>
<svg style="left:927px;top:353px" width="32" height="7" viewBox="0 0 32 7"><path d="M0.00 0.50 L5.00 0.60 L9.00 1.30 L12.00 1.00 L18.00 1.40 L25.00 1.80 L28.00 2.50 L32.00 7.00 L32 7 L0 7Z" fill="#9fe2d2"/><path d="M0.00 0.50 L5.00 0.60 L9.00 1.30 L12.00 1.00 L18.00 1.40 L25.00 1.80 L28.00 2.50 L32.00 7.00" fill="none" stroke="#2f8f7c" stroke-width="0.7"/></svg>
<div class="b" style="left:963px;top:351px;width:2.2px;height:22px;background:#7fd6c2;"></div>
<div class="a" style="top:351.00px;font-size:7.6px;line-height:12px;color:#2f3237;right:14.50px;text-align:right;">11%</div>
<svg style="left:789px;top:364.4px" width="8" height="8" viewBox="0 0 8 8"><path d="M5.75 0.97 A3.5 3.5 0 1 1 3.39 0.55" fill="none" stroke="#8d8f93" stroke-width="0.85"/><path d="M4 4.1 L5.5 2.5" stroke="#8d8f93" stroke-width="0.85"/></svg>
<div class="a" style="top:362.50px;font-size:7.3px;line-height:12px;color:#2b2e33;left:802.00px;font-weight:bold;">arrival_time</div>
<svg style="left:927px;top:364.5px" width="32" height="7" viewBox="0 0 32 7"><path d="M0.00 0.50 L5.00 0.60 L9.00 1.30 L12.00 1.00 L18.00 1.40 L25.00 1.80 L28.00 2.50 L32.00 7.00 L32 7 L0 7Z" fill="#9fe2d2"/><path d="M0.00 0.50 L5.00 0.60 L9.00 1.30 L12.00 1.00 L18.00 1.40 L25.00 1.80 L28.00 2.50 L32.00 7.00" fill="none" stroke="#2f8f7c" stroke-width="0.7"/></svg>
<div class="a" style="top:362.50px;font-size:7.6px;line-height:12px;color:#2f3237;right:14.50px;text-align:right;">11%</div>
<svg style="left:776px;top:375px" width="224" height="45" viewBox="0 0 224 45"><path d="M0 0 H26 L34 18 L34 45 H0Z" fill="#f4fafc"/><path d="M62 0 H175 L184 18 V45 H40 L50 18Z" fill="#f4fafc"/></svg>
<div class="b" style="left:808px;top:410px;width:180px;height:0.7px;background:#e6e6e6;"></div>
<div class="b" style="left:962px;top:392px;width:0.7px;height:28px;background:#e6e6e6;"></div>
<svg style="left:775px;top:370px" width="225" height="50" viewBox="0 0 225 50"><path d="M33.3 22.5 L84.5 22.5 L110.4 38.3 L136.3 25.2 L162.2 36.5 L187 40.5 L192 52 L33.3 52Z" fill="#ade8dc"/><path d="M33.3 22.5 L84.5 22.5 L110.4 38.3 L136.3 25.2 L162.2 36.5 L187 40.5 L192 52" fill="none" stroke="#4f8a7e" stroke-width="0.75"/></svg>
<svg style="left:808px;top:392px" width="160" height="28" viewBox="0 0 160 28"><path d="M51.5 1 V28 M103.5 3 V28" stroke="#8ccfbf" stroke-width="0.6" stroke-dasharray="1 2"/><path d="M1 18.5 H155" stroke="#8ccfbf" stroke-width="0.6" stroke-dasharray="1 2.5"/></svg>
<div class="a" style="top:404.50px;font-size:7.2px;line-height:12px;color:#33363b;left:790.00px;">40k</div>
</body></html>
